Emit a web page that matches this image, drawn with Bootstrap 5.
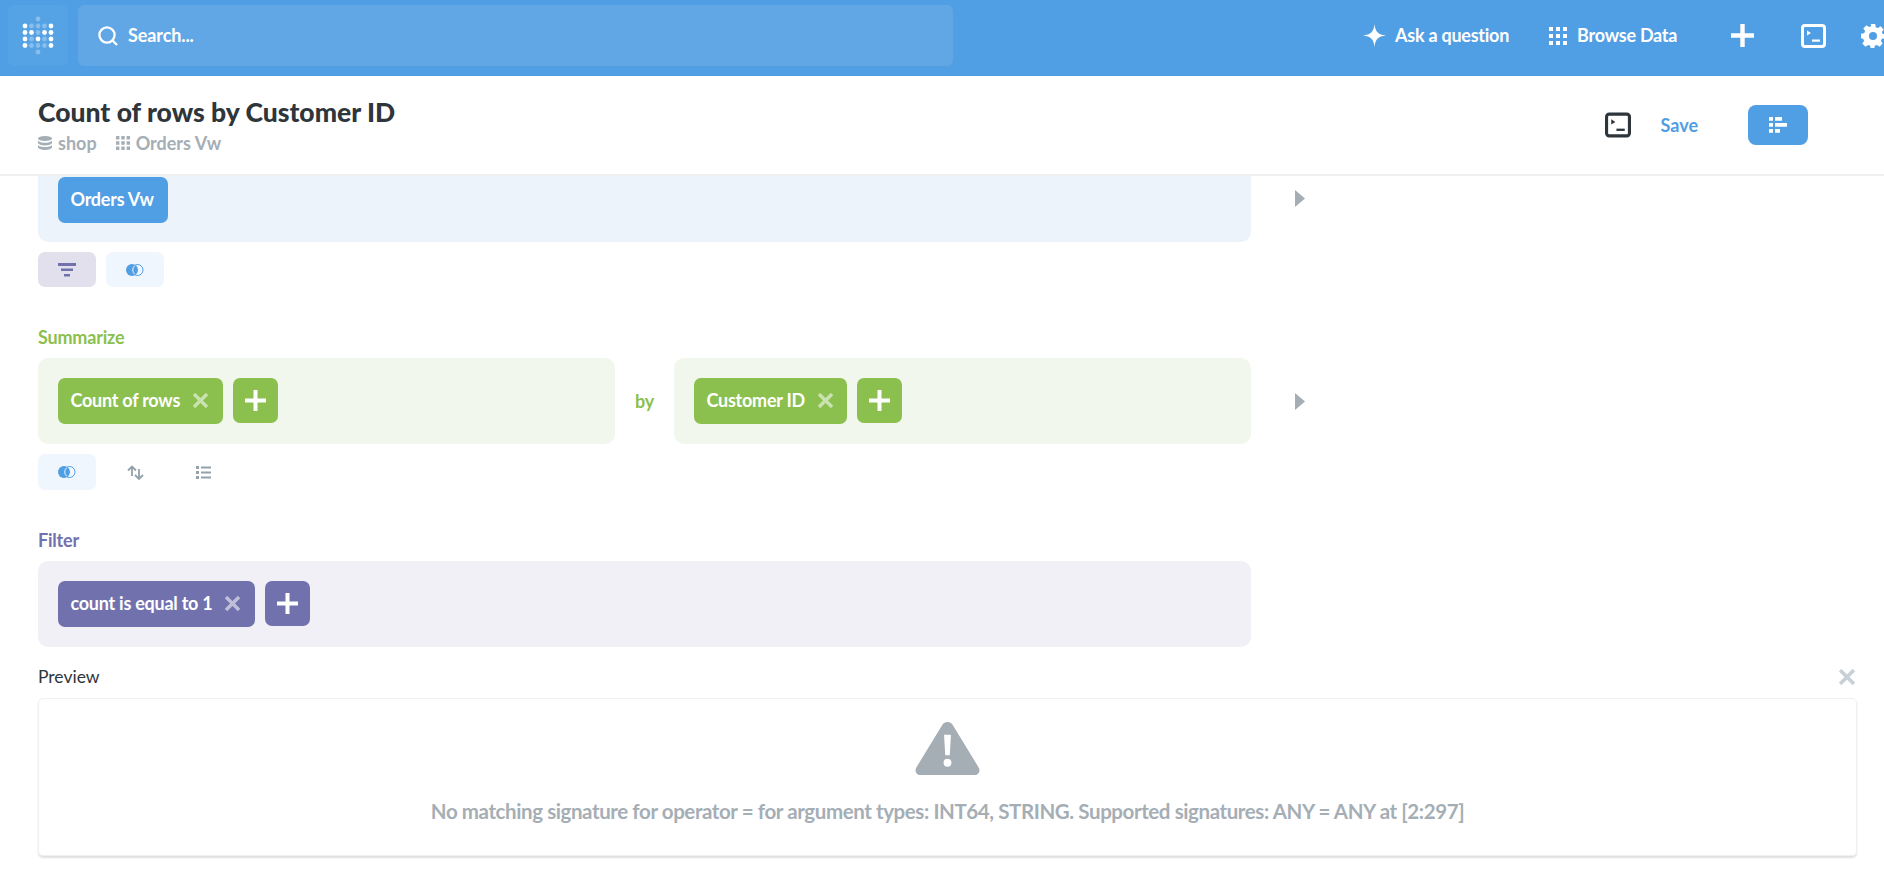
<!DOCTYPE html>
<html lang="en">
<head>
<meta charset="utf-8">
<title>Count of rows by Customer ID</title>
<link href="https://cdn.jsdelivr.net/npm/bootstrap@5.3.0/dist/css/bootstrap.min.css" rel="stylesheet">
<style>
html,body{height:100%;overflow:hidden}
body{font-family:Lato,"Liberation Sans",sans-serif;font-weight:700;color:#2e353b;background:#fff}
.mb-nav{height:76px;background:#509ee3;color:#fff;overflow:hidden;padding:5px 0 10px 8px}
.mb-logo{width:60px;height:61px;border-radius:6px;background:#55a2e5;flex:none}
.mb-search{width:875px;height:61px;margin-left:10px;border-radius:6px;background:#61a7e5;padding-left:20px;gap:10px;font-size:18px;letter-spacing:-.1px;flex:none}
.mb-navlink{font-size:18px;letter-spacing:-.25px;white-space:nowrap;flex:none}
.mb-ask{margin-left:410px;gap:9px}
.mb-browse{margin-left:40px;gap:10px}
.mb-plus{margin-left:54px}
.mb-term{margin-left:47px}
.mb-gear{margin-left:35px}
.mb-head{height:100px;border-bottom:2px solid #f0f0f0;padding:0 76px 0 38px}
.mb-title{font-size:26.500px;font-weight:900;line-height:30px;margin:0 0 6px}
.mb-crumbs{font-size:18px;color:#a5aeb5;line-height:20px;gap:19px}
.mb-crumb{gap:6px}
.mb-save{color:#509ee3;font-size:18px;margin:0 50px 0 29px}
.mb-viz{width:60px;height:40px;background:#509ee3;border-radius:8px;border:0;padding:0}
.mb-work{padding:0 27px 0 38px;height:calc(100vh - 176px)}
.mb-wide{width:1213px}
.mb-panel{border-radius:10px;padding:20px;height:86px;gap:10px}
.mb-panel-data{background:#ecf3fb;height:66px;padding-top:1px;border-radius:0 0 10px 10px}
.mb-panel-sum{background:#f1f7ec}
.mb-panel-fil{background:#f1f0f7}
.mb-half{width:577px}
.mb-chip{height:46px;border-radius:7px;color:#fff;font-size:18px;letter-spacing:-.25px;padding:0 14.500px 2px 12.500px;gap:13px;white-space:nowrap;flex:none}
.mb-add{width:45px;height:45px;border-radius:7px;color:#fff;flex:none}
.mb-blue{background:#509ee3}.mb-green{background:#8bc04e}.mb-purple{background:#7172ad}
.mb-x{opacity:.55}
.mb-chev{margin-left:44px;flex:none}
.mb-chev-top{margin-top:14px}
.mb-by{width:59px;text-align:center;color:#8bc04e;font-size:18px;letter-spacing:-.25px}
.mb-actions{margin-top:10px;gap:10px;height:36px}
.mb-actions-first{height:35px}
.mb-act{width:58px;height:36px;border-radius:7px;flex:none}
.mb-actions-first .mb-act{height:35px}
.mb-act-fil{background:#e1e0ec}.mb-act-join{background:#f0f6fd}
.mb-label{font-size:18px;letter-spacing:-.2px;line-height:20px}
.mb-label-sum{color:#8bc04e;margin:40px 0 11px}
.mb-label-fil{color:#7172ad;margin:40px 0 11px}
.mb-prev-head{margin:20px 0 11px;font-weight:400;font-size:17.500px;line-height:20px;color:#2e353b}
.mb-prev-close{margin-right:2px}
.mb-card{height:158px;border:1px solid #f0f0f0;border-radius:5px;box-shadow:0 2px 2px rgba(0,0,0,.13);color:#a5aeb5;font-size:20.500px;letter-spacing:-.41px;padding-top:23px}
.mb-card p{margin:23px 0 0;line-height:26px}
</style>
</head>
<body>
<nav class="mb-nav d-flex align-items-center">
  <div class="mb-logo d-flex align-items-center justify-content-center">
    <svg width="34" height="42" viewBox="0 0 34 42" fill="#fff">
      <g fill-opacity=".3"><circle cx="17" cy="4" r="2.400"/><circle cx="10.500" cy="11" r="2.400"/><circle cx="17" cy="11" r="2.400"/><circle cx="23.500" cy="11" r="2.400"/><circle cx="17" cy="17.500" r="2.400"/><circle cx="10.500" cy="24" r="2.400"/><circle cx="23.500" cy="24" r="2.400"/><circle cx="10.500" cy="30.500" r="2.400"/><circle cx="17" cy="30.500" r="2.400"/><circle cx="23.500" cy="30.500" r="2.400"/><circle cx="17" cy="37" r="2.400"/></g>
      <circle cx="4" cy="11" r="2.400"/><circle cx="30" cy="11" r="2.400"/><circle cx="4" cy="17.500" r="2.400"/><circle cx="10.500" cy="17.500" r="2.400"/><circle cx="23.500" cy="17.500" r="2.400"/><circle cx="30" cy="17.500" r="2.400"/><circle cx="4" cy="24" r="2.400"/><circle cx="17" cy="24" r="2.400"/><circle cx="30" cy="24" r="2.400"/><circle cx="4" cy="30.500" r="2.400"/><circle cx="30" cy="30.500" r="2.400"/>
    </svg>
  </div>
  <div class="mb-search d-flex align-items-center">
    <svg width="20" height="20" viewBox="0 0 20 20" fill="none" stroke="#fff" stroke-width="2.300"><circle cx="9" cy="9" r="7.600"/><path d="M14.500 14.500 19 19"/></svg>
    <span>Search...</span>
  </div>
  <div class="mb-navlink mb-ask d-flex align-items-center">
    <svg width="23" height="23" viewBox="0 0 22 22" fill="#fff"><path d="M11 0c.6 7 3.400 10.300 11 11-7.600.7-10.400 4-11 11-.6-7-3.400-10.300-11-11C7.600 10.300 10.400 7 11 0z"/></svg>
    <span>Ask a question</span>
  </div>
  <div class="mb-navlink mb-browse d-flex align-items-center">
    <svg width="18" height="18" viewBox="0 0 18 18" fill="#fff"><path d="M0 0h4v4H0zM7 0h4v4H7zM14 0h4v4h-4zM0 7h4v4H0zM7 7h4v4H7zM14 7h4v4h-4zM0 14h4v4H0zM7 14h4v4H7zM14 14h4v4h-4z"/></svg>
    <span>Browse Data</span>
  </div>
  <div class="mb-navlink mb-plus d-flex align-items-center">
    <svg width="23" height="23" viewBox="0 0 23 23" fill="#fff"><path d="M9.300 0h4.400v9.300H23v4.400h-9.300V23H9.300v-9.300H0V9.300h9.300z"/></svg>
  </div>
  <div class="mb-navlink mb-term d-flex align-items-center">
    <svg width="25" height="24" viewBox="0 0 25 24"><rect x="1.500" y="1.500" width="22" height="21" rx="2.500" fill="none" stroke="#fff" stroke-width="3"/><path d="M6 6.500l4 2.500-4 2.500z" fill="#fff"/><path d="M11 15.500h8v2.200h-8z" fill="#fff"/></svg>
  </div>
  <div class="mb-navlink mb-gear d-flex align-items-center">
    <svg width="24" height="24" viewBox="0 0 24 24" fill="#fff"><path fill-rule="evenodd" d="M9.800 0h4.400l.6 3.200 2.100.9 2.700-1.800 3.100 3.100-1.800 2.700.9 2.100L24 9.800v4.400l-3.200.6-.9 2.100 1.800 2.700-3.100 3.100-2.700-1.800-2.100.9-.6 3.200H9.800l-.6-3.200-2.100-.9-2.700 1.800-3.100-3.100 1.800-2.700-.9-2.100L0 14.200V9.800l3.200-.6.9-2.100-1.800-2.700 3.100-3.100 2.700 1.800 2.100-.9zM12 8a4 4 0 1 0 0 8 4 4 0 0 0 0-8z"/></svg>
  </div>
</nav>

<header class="mb-head d-flex align-items-center">
  <div>
    <h1 class="mb-title">Count of rows by Customer ID</h1>
    <div class="mb-crumbs d-flex">
      <span class="mb-crumb d-flex align-items-center">
        <svg width="14" height="14" viewBox="0 0 14 14" fill="#a5aeb5"><ellipse cx="7" cy="2.500" rx="7" ry="2.500"/><path d="M0 4.500c1 1.700 3.800 2.300 7 2.300s6-.6 7-2.300v2.500c-.5 1.500-3.500 2.500-7 2.500S.5 8.500 0 7zM0 9c1 1.500 3.800 2 7 2s6-.5 7-2v2.500C13.500 13 10.500 14 7 14S.5 13 0 11.500z"/></svg>
        shop
      </span>
      <span class="mb-crumb d-flex align-items-center">
        <svg width="14" height="14" viewBox="0 0 14 14" fill="#a5aeb5"><path d="M0 0h3.400v3.400H0zM5.300 0h3.400v3.400H5.300zM10.600 0H14v3.400h-3.400zM0 5.300h3.400v3.400H0zM5.300 5.300h3.400v3.400H5.300zM10.600 5.300H14v3.400h-3.400zM0 10.600h3.400V14H0zM5.300 10.600h3.400V14H5.300zM10.600 10.600H14V14h-3.400z"/></svg>
        Orders Vw
      </span>
    </div>
  </div>
  <div class="ms-auto d-flex align-items-center">
    <svg width="26" height="26" viewBox="0 0 25 24"><rect x="1.500" y="1.500" width="22" height="21" rx="2.500" fill="none" stroke="#2e353b" stroke-width="3"/><path d="M6 6.500l4 2.500-4 2.500z" fill="#2e353b"/><path d="M11 15.500h8v2.200h-8z" fill="#2e353b"/></svg>
    <span class="mb-save">Save</span>
    <button class="mb-viz btn d-flex align-items-center justify-content-center" type="button" aria-label="Visualize">
      <svg width="18" height="16" viewBox="0 0 18 16" fill="#fff"><path d="M0 0h4v3.800H0zM6 0h7v3.800H6zM0 6h4v3.800H0zM6 6h12v3.800H6zM0 12h4v3.800H0zM6 12h5v3.800H6z"/></svg>
    </button>
  </div>
</header>

<main class="mb-work">
  <div class="d-flex align-items-start">
    <div class="mb-panel mb-panel-data mb-wide d-flex">
      <span class="mb-chip mb-blue d-flex align-items-center">Orders Vw</span>
    </div>
    <svg class="mb-chev mb-chev-top" width="10" height="17" viewBox="0 0 10 17" fill="#a5aeb5"><path d="M0 0l10 8.500L0 17z"/></svg>
  </div>
  <div class="mb-actions mb-actions-first d-flex">
    <span class="mb-act mb-act-fil d-flex align-items-center justify-content-center">
      <svg width="18" height="14" viewBox="0 0 18 14" fill="#7172ad"><path d="M0 0h18v3H0zM3 5.500h12v2.500H3zM6 11h6v2.500H6z"/></svg>
    </span>
    <span class="mb-act mb-act-join d-flex align-items-center justify-content-center">
      <svg width="18" height="12" viewBox="0 0 18 12"><circle cx="6" cy="6" r="6" fill="#509ee3"/><circle cx="11.500" cy="6" r="5.500" fill="none" stroke="#509ee3"/><path d="M8.800 1.700a5.500 5.500 0 0 0 0 8.600" fill="none" stroke="#f0f6fd" stroke-width="1"/></svg>
    </span>
  </div>

  <div class="mb-label mb-label-sum">Summarize</div>
  <div class="d-flex align-items-center">
    <div class="mb-wide d-flex align-items-center">
      <div class="mb-panel mb-panel-sum mb-half d-flex align-items-start">
        <span class="mb-chip mb-green d-flex align-items-center">Count of rows
          <svg class="mb-x" width="15" height="15" viewBox="0 0 15 15" fill="none" stroke="#fff" stroke-width="3.400"><path d="M1 1l13 13M14 1 1 14"/></svg>
        </span>
        <span class="mb-add mb-green d-flex align-items-center justify-content-center"><svg width="21" height="21" viewBox="0 0 23 23" fill="#fff"><path d="M9.300 0h4.400v9.300H23v4.400h-9.300V23H9.300v-9.300H0V9.300h9.300z"/></svg></span>
      </div>
      <span class="mb-by">by</span>
      <div class="mb-panel mb-panel-sum mb-half d-flex align-items-start">
        <span class="mb-chip mb-green d-flex align-items-center">Customer ID
          <svg class="mb-x" width="15" height="15" viewBox="0 0 15 15" fill="none" stroke="#fff" stroke-width="3.400"><path d="M1 1l13 13M14 1 1 14"/></svg>
        </span>
        <span class="mb-add mb-green d-flex align-items-center justify-content-center"><svg width="21" height="21" viewBox="0 0 23 23" fill="#fff"><path d="M9.300 0h4.400v9.300H23v4.400h-9.300V23H9.300v-9.300H0V9.300h9.300z"/></svg></span>
      </div>
    </div>
    <svg class="mb-chev" width="10" height="17" viewBox="0 0 10 17" fill="#a5aeb5"><path d="M0 0l10 8.500L0 17z"/></svg>
  </div>
  <div class="mb-actions d-flex">
    <span class="mb-act mb-act-join d-flex align-items-center justify-content-center">
      <svg width="18" height="12" viewBox="0 0 18 12"><circle cx="6" cy="6" r="6" fill="#509ee3"/><circle cx="11.500" cy="6" r="5.500" fill="none" stroke="#509ee3"/><path d="M8.800 1.700a5.500 5.500 0 0 0 0 8.600" fill="none" stroke="#f0f6fd" stroke-width="1"/></svg>
    </span>
    <span class="mb-act d-flex align-items-center justify-content-center">
      <svg width="17" height="15" viewBox="0 0 17 15" fill="none" stroke="#93a1ab" stroke-width="1.800"><path d="M5 11V2M1 5.500 5 1.500l4 4M12 4v10M8 10l4 4 4-4"/></svg>
    </span>
    <span class="mb-act d-flex align-items-center justify-content-center">
      <svg width="15" height="13" viewBox="0 0 15 13" fill="#93a1ab"><path d="M0 0h3v3H0zM5 .5h10v2H5zM0 5h3v3H0zM5 5.500h10v2H5zM0 10h3v3H0zM5 10.500h10v2H5z"/></svg>
    </span>
  </div>

  <div class="mb-label mb-label-fil">Filter</div>
  <div class="mb-panel mb-panel-fil mb-wide d-flex align-items-start">
    <span class="mb-chip mb-purple d-flex align-items-center">count is equal to 1
      <svg class="mb-x" width="15" height="15" viewBox="0 0 15 15" fill="none" stroke="#fff" stroke-width="3.400"><path d="M1 1l13 13M14 1 1 14"/></svg>
    </span>
    <span class="mb-add mb-purple d-flex align-items-center justify-content-center"><svg width="21" height="21" viewBox="0 0 23 23" fill="#fff"><path d="M9.300 0h4.400v9.300H23v4.400h-9.300V23H9.300v-9.300H0V9.300h9.300z"/></svg></span>
  </div>

  <div class="mb-prev-head d-flex justify-content-between align-items-center">
    <span>Preview</span>
    <svg class="mb-prev-close" width="16" height="16" viewBox="0 0 15 15" fill="none" stroke="#c6d0d6" stroke-width="3.400"><path d="M1 1l13 13M14 1 1 14"/></svg>
  </div>
  <section class="mb-card text-center">
    <svg width="65" height="53" viewBox="0 0 66 54"><path fill="#a5aeb5" fill-rule="evenodd" d="M27.500 3.200c2.600-4.300 8.400-4.300 11 0l26.400 43.400c1.900 3.200-.4 7.400-4.100 7.400H5.200C1.500 54-.8 49.800 1.100 46.600zM29.500 13l1.200 21h4.600l1.200-21zM33 37.500a4 4 0 1 0 0 8 4 4 0 0 0 0-8z"/></svg>
    <p>No matching signature for operator = for argument types: INT64, STRING. Supported signatures: ANY = ANY at [2:297]</p>
  </section>
</main>
<script src="https://cdn.jsdelivr.net/npm/bootstrap@5.3.0/dist/js/bootstrap.bundle.min.js"></script>
</body>
</html>
